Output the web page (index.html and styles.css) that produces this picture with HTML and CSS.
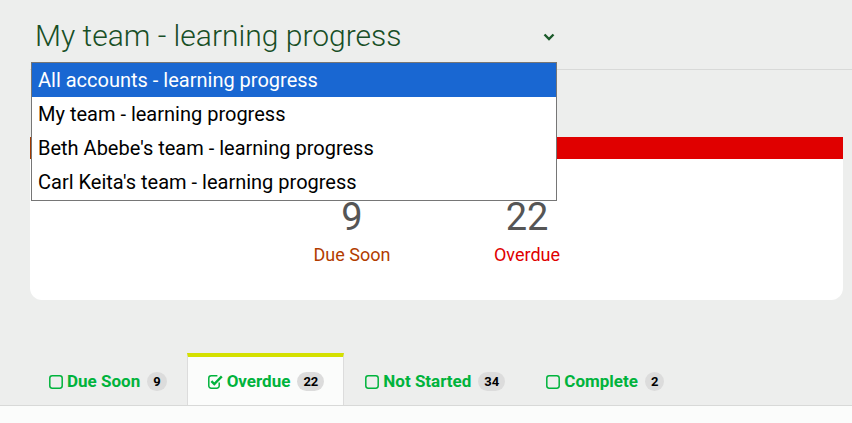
FILE: index.html
```html
<!DOCTYPE html>
<html lang="en">
<head>
<meta charset="utf-8">
<title>My team - learning progress</title>
<link rel="stylesheet" href="styles.css">
</head>
<body>
<div class="page">
  <header class="header">
    <div class="picker">
      <span class="picker-label">My team - learning progress</span>
      <svg class="chevron" width="12" height="8" viewBox="0 0 12 8"><path d="M1.5 1.5 L6 6 L10.5 1.5" fill="none" stroke="#1b5a2a" stroke-width="2.4"/></svg>
    </div>
    <ul class="options">
      <li class="option selected">All accounts - learning progress</li>
      <li class="option">My team - learning progress</li>
      <li class="option">Beth Abebe's team - learning progress</li>
      <li class="option">Carl Keita's team - learning progress</li>
    </ul>
  </header>

  <section class="card">
    <div class="bar">
      <div class="bar-soon" style="width:29%"></div>
      <div class="bar-over"></div>
    </div>
    <div class="stats">
      <div class="stat">
        <div class="stat-num">9</div>
        <div class="stat-label soon">Due Soon</div>
      </div>
      <div class="stat">
        <div class="stat-num">22</div>
        <div class="stat-label over">Overdue</div>
      </div>
    </div>
  </section>

  <nav class="tabs">
    <div class="tab">
      <svg class="box" width="14" height="14" viewBox="0 0 14 14"><rect x="0.8" y="0.8" width="12.4" height="12.4" rx="2.4" fill="none" stroke="#00b33c" stroke-width="1.5"/></svg>
      <span class="tab-text">Due Soon</span><span class="badge">9</span>
    </div>
    <div class="tab active">
      <svg class="box" width="15" height="14" viewBox="0 0 15 14"><path d="M11.2 7.6 V10.8 A2.4 2.4 0 0 1 8.8 13.2 H3.2 A2.4 2.4 0 0 1 0.8 10.8 V3.2 A2.4 2.4 0 0 1 3.2 0.8 H9.4" fill="none" stroke="#00b33c" stroke-width="1.5"/><path d="M3.4 6.2 L6.3 9.1 L13.8 1.4" fill="none" stroke="#00b33c" stroke-width="2.4"/></svg>
      <span class="tab-text">Overdue</span><span class="badge">22</span>
    </div>
    <div class="tab">
      <svg class="box" width="14" height="14" viewBox="0 0 14 14"><rect x="0.8" y="0.8" width="12.4" height="12.4" rx="2.4" fill="none" stroke="#00b33c" stroke-width="1.5"/></svg>
      <span class="tab-text">Not Started</span><span class="badge">34</span>
    </div>
    <div class="tab">
      <svg class="box" width="14" height="14" viewBox="0 0 14 14"><rect x="0.8" y="0.8" width="12.4" height="12.4" rx="2.4" fill="none" stroke="#00b33c" stroke-width="1.5"/></svg>
      <span class="tab-text">Complete</span><span class="badge">2</span>
    </div>
  </nav>
  <div class="below"></div>
</div>
</body>
</html>
```

FILE: styles.css
```css
* { box-sizing: border-box; }
html, body { margin: 0; padding: 0; }
body {
  background: #edeeed;
  font-family: Roboto, "Liberation Sans", Arial, sans-serif;
  width: 852px;
  height: 423px;
  overflow: hidden;
}
.page {
  display: flex;
  flex-direction: column;
  height: 423px;
}
.header {
  position: relative;
  height: 70px;
  margin-left: 30px;
  border-bottom: 1px solid #d8d9d8;
}
.picker {
  display: flex;
  align-items: center;
  width: 527px;
  padding: 16px 0 0 5px;
  justify-content: space-between;
}
.picker-label {
  font-size: 30px;
  font-weight: 300;
  line-height: 40px;
  color: #184f26;
}
.chevron { margin-right: 2px; margin-top: 2px; }
.options {
  position: absolute;
  left: 1px;
  top: 62px;
  width: 526px;
  margin: 0;
  padding: 0 0 1px;
  list-style: none;
  background: #fff;
  border: 1px solid #767676;
  z-index: 5;
}
.option {
  height: 34px;
  line-height: 34px;
  padding-left: 6px;
  font-size: 20px;
  color: #000;
}
.option.selected {
  background: #1967d2;
  color: #fff;
}
.card {
  margin: 67px 9px 0 30px;
  background: #fff;
  border-radius: 0 0 12px 12px;
  padding-bottom: 35px;
}
.bar {
  display: flex;
  height: 22px;
}
.bar-soon { background: #a33a00; }
.bar-over { flex: 1; background: #e00000; }
.stats {
  display: flex;
  justify-content: center;
  padding: 39px 0 0 6px;
}
.stat {
  width: 175px;
  text-align: center;
}
.stat-num {
  font-size: 38px;
  line-height: 38px;
  color: #555;
}
.stat-label {
  margin-top: 9px;
  font-size: 18px;
  line-height: 20px;
}
.stat-label.soon { color: #b23c00; }
.stat-label.over { color: #e00000; }
.tabs {
  display: flex;
  margin-top: 53px;
  padding-left: 28px;
  border-bottom: 1px solid #d8d9d8;
}
.tab {
  display: flex;
  align-items: center;
  height: 52px;
  padding: 0 19px 0 20px;
  border-top: 4px solid transparent;
  border-left: 1px solid transparent;
  border-right: 1px solid transparent;
  color: #00b33c;
  font-weight: 700;
  font-size: 17px;
}
.tab.active {
  background: #fbfcfb;
  border-top-color: #d4e000;
  border-left-color: #dcdcdc;
  border-right-color: #dcdcdc;
}
.box { margin-right: 4px; margin-top: 1px; }
.tab-text { line-height: 20px; }
.badge {
  margin-left: 7px;
  min-width: 19px;
  height: 19px;
  padding: 0 6px;
  border-radius: 10px;
  background: #dcdcdc;
  color: #000;
  font-size: 13px;
  line-height: 19px;
  text-align: center;
}
.below {
  flex: 1;
  background: #fbfcfb;
}
```
